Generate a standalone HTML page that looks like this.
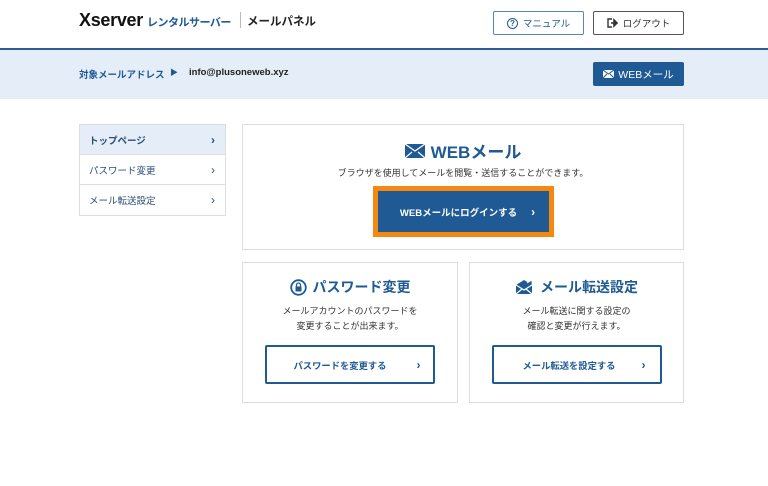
<!DOCTYPE html>
<html><head><meta charset="utf-8"><style>
*{box-sizing:border-box;margin:0;padding:0}
body{width:768px;height:486px;background:#fff;font-family:"Liberation Sans","Noto Sans CJK JP",sans-serif;color:#333;position:relative;overflow:hidden}
.a{position:absolute}
.hdr{left:0;top:0;width:768px;height:50px;border-bottom:2px solid #2e5f8c}
.band{left:0;top:50px;width:768px;height:49px;background:#e5eef8}
.tb{height:24px;border:1px solid;border-radius:2px;font-size:9.5px;display:flex;align-items:center;justify-content:center;gap:5px;background:#fff}
.card{border:1px solid #ddd;background:#fff}
.side{left:79px;top:124px;width:147px;border:1px solid #ddd}
.side div{height:30px;border-bottom:1px solid #ddd;font-size:9.5px;padding-left:9px;display:flex;align-items:center;justify-content:space-between;padding-right:10px;color:#2b4f75}
.side div:last-child{border-bottom:0}
.ch{font-size:12px;color:#2b4f75}
.h{font-size:17px;font-weight:bold;color:#1f5a95;display:flex;align-items:center;justify-content:center;gap:6px}
.p{font-size:9px;color:#333;text-align:center;line-height:15px}
.ob{border:2px solid #1f5a95;border-radius:2px;font-size:9.3px;font-weight:bold;color:#1f5a95;display:flex;align-items:center;justify-content:center}
</style></head><body>
<div class="a hdr"></div>
<div class="a" style="left:79px;top:10px;font-size:18px;font-weight:bold;color:#111;letter-spacing:-0.3px">Xserver</div>
<div class="a" style="left:147px;top:14px;font-size:11px;font-weight:bold;color:#1f5a95;letter-spacing:-0.5px">レンタルサーバー</div>
<div class="a" style="left:240px;top:12px;width:1px;height:16px;background:#bbb"></div>
<div class="a" style="left:247px;top:13px;font-size:11.5px;font-weight:bold;color:#222">メールパネル</div>
<div class="a tb" style="left:493px;top:11px;width:91px;border-color:#5a86b6;color:#1f5a95"><span style="display:inline-block;width:11px;height:11px;border:1.3px solid #1f5a95;border-radius:50%;font-size:8px;line-height:9px;text-align:center;font-weight:bold">?</span>マニュアル</div>
<div class="a tb" style="left:593px;top:11px;width:91px;border-color:#555;color:#333"><svg width="11" height="10" viewBox="0 0 11 10"><path d="M5 1H1v8h4" fill="none" stroke="#333" stroke-width="1.4"/><path d="M4 5h4M7 2l3 3-3 3z" stroke="#333" stroke-width="1.6" fill="#333"/></svg>ログアウト</div>
<div class="a band"></div>
<div class="a" style="left:79px;top:67px;font-size:9.5px;font-weight:bold;color:#1f5a95">対象メールアドレス</div>
<div class="a" style="left:170px;top:67px;font-size:8px;color:#1f5a95">▶</div>
<div class="a" style="left:189px;top:67px;font-size:9.5px;font-weight:bold;color:#222">info@plusoneweb.xyz</div>
<div class="a" style="left:593px;top:62px;width:91px;height:24px;background:#1f5a95;border-radius:2px;color:#fff;font-size:10.5px;display:flex;align-items:center;justify-content:center;gap:4px"><svg width="11" height="8" viewBox="0 0 11 8"><rect width="11" height="8" fill="#fff"/><path d="M0 0l5.5 4L11 0M0 8l4-4M11 8L7 4" stroke="#1f5a95" fill="none"/></svg>WEBメール</div>
<div class="a side"><div style="background:#e5eef8;font-weight:bold">トップページ<span class="ch">›</span></div><div>パスワード変更<span class="ch">›</span></div><div>メール転送設定<span class="ch">›</span></div></div>
<div class="a card" style="left:242px;top:124px;width:442px;height:126px"></div>
<div class="a h" style="left:242px;top:138px;width:442px"><svg width="20" height="14" viewBox="0 0 20 14"><rect width="20" height="14" fill="#1f5a95"/><path d="M0 0l10 7L20 0M0 14l7-6M20 14l-7-6" stroke="#fff" stroke-width="1.3" fill="none"/></svg>WEBメール</div>
<div class="a p" style="left:242px;top:166px;width:442px">ブラウザを使用してメールを閲覧・送信することができます。</div>
<div class="a" style="left:373px;top:186px;width:181px;height:51px;background:#f7880f"></div>
<div class="a" style="left:378px;top:191px;width:171px;height:41px;background:#1f5a95;color:#fff;font-size:9.5px;font-weight:bold;display:flex;align-items:center;justify-content:center;gap:14px;padding-left:8px">WEBメールにログインする<span style="font-size:12px">›</span></div>
<div class="a card" style="left:242px;top:262px;width:216px;height:141px"></div>
<div class="a h" style="left:242px;top:277px;width:216px;font-size:14px"><svg width="17" height="17" viewBox="0 0 17 17"><circle cx="8.5" cy="8.5" r="7.3" fill="none" stroke="#1f5a95" stroke-width="1.8"/><rect x="5.5" y="7.5" width="6" height="5" fill="#1f5a95"/><path d="M6.5 7.5V6a2 2 0 014 0v1.5" fill="none" stroke="#1f5a95" stroke-width="1.3"/></svg>パスワード変更</div>
<div class="a p" style="left:242px;top:304px;width:216px">メールアカウントのパスワードを<br>変更することが出来ます。</div>
<div class="a ob" style="left:265px;top:345px;width:170px;height:39px;gap:30px;padding-left:14px">パスワードを変更する<span style="font-size:12px">›</span></div>
<div class="a card" style="left:469px;top:262px;width:215px;height:141px"></div>
<div class="a h" style="left:469px;top:277px;width:215px;font-size:14px"><svg width="19" height="16" viewBox="0 0 19 16"><path d="M1 6l8-5 8 5v9H1z" fill="#1f5a95"/><path d="M1 6l8 5 8-5M1 15l6-5M17 15l-6-5" stroke="#fff" stroke-width="1.2" fill="none"/><path d="M12 4l5-3v5" fill="#1f5a95" stroke="#fff" stroke-width=".8"/></svg>メール転送設定</div>
<div class="a p" style="left:469px;top:304px;width:215px">メール転送に関する設定の<br>確認と変更が行えます。</div>
<div class="a ob" style="left:492px;top:345px;width:170px;height:39px;gap:26px;padding-left:14px">メール転送を設定する<span style="font-size:12px">›</span></div>
</body></html>
